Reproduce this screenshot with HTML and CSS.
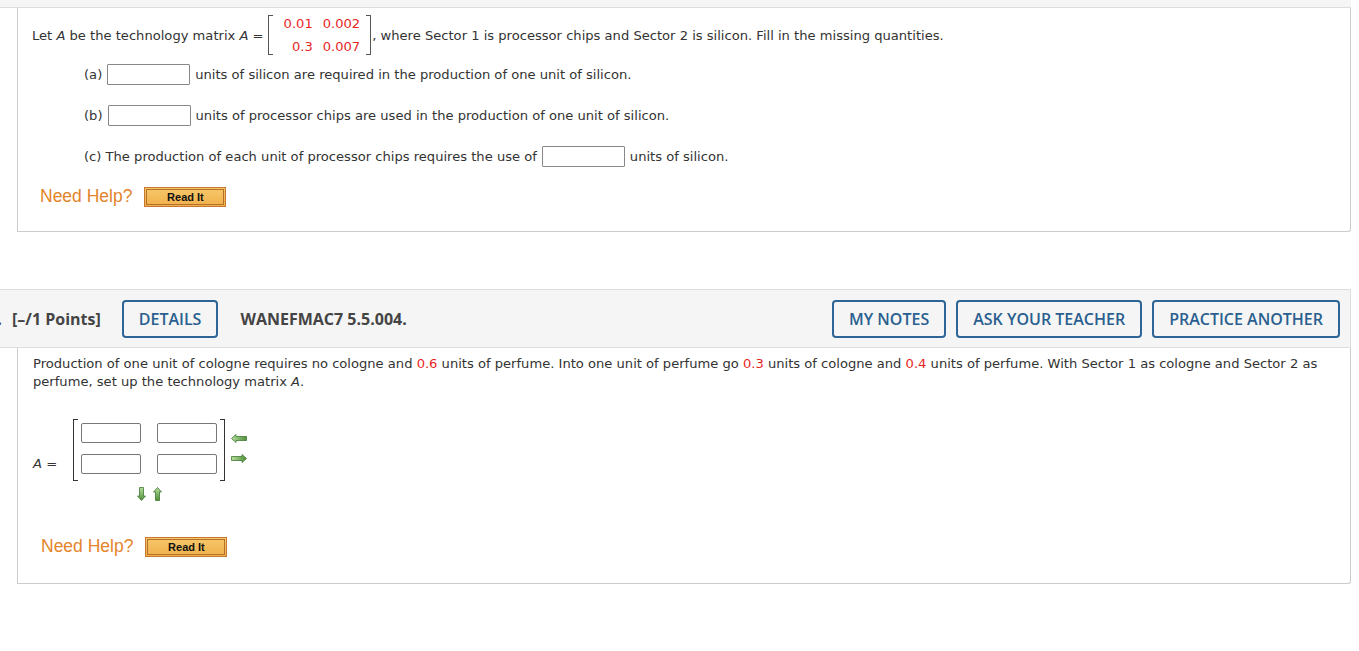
FILE: index.html
```html
<!DOCTYPE html>
<html>
<head>
<meta charset="utf-8">
<link rel="stylesheet" href="styles.css">
</head>
<body>
<div class="top-strip"></div>
<div class="qbox qbox-first">
  <div class="stem">
    <span>Let <i>A</i> be the technology matrix <i>A</i> =</span>
    <span class="matrix">
      <span class="brk brk-l"></span>
      <span class="mgrid">
        <span class="red">0.01</span><span class="red">0.002</span>
        <span class="red">0.3</span><span class="red">0.007</span>
      </span>
      <span class="brk brk-r"></span>
    </span>
    <span class="after-matrix">, where Sector 1 is processor chips and Sector 2 is silicon. Fill in the missing quantities.</span>
  </div>
  <div class="part"><span>(a)</span><span class="ans"></span><span>units of silicon are required in the production of one unit of silicon.</span></div>
  <div class="part"><span>(b)</span><span class="ans"></span><span>units of processor chips are used in the production of one unit of silicon.</span></div>
  <div class="part"><span>(c) The production of each unit of processor chips requires the use of</span><span class="ans"></span><span>units of silicon.</span></div>
  <div class="help"><span class="need">Need Help?</span><span class="readit"><span>Read It</span></span></div>
</div>

<div class="qhead">
  <span class="qnum">5.</span>
  <span class="points">[–/1 Points]</span>
  <span class="btn">DETAILS</span>
  <span class="qid">WANEFMAC7 5.5.004.</span>
  <span class="spacer"></span>
  <span class="btn">MY NOTES</span>
  <span class="btn">ASK YOUR TEACHER</span>
  <span class="btn">PRACTICE ANOTHER</span>
</div>
<div class="qbox qbox-second">
  <p class="para">Production of one unit of cologne requires no cologne and <span class="red">0.6</span> units of perfume. Into one unit of perfume go <span class="red">0.3</span> units of cologne and <span class="red">0.4</span> units of perfume. With Sector 1 as cologne and Sector 2 as perfume, set up the technology matrix <i>A</i>.</p>
  <div class="mat-row">
    <span class="alabel"><i>A</i> =</span>
    <div class="mat-wrap">
      <div class="mat-inner">
        <span class="brk2 brk2-l"></span>
        <div class="cells">
          <span class="cell"></span><span class="cell"></span>
          <span class="cell"></span><span class="cell"></span>
        </div>
        <span class="brk2 brk2-r"></span>
        <div class="side-arrows">
          <svg width="16" height="9" viewBox="0 0 16 9"><defs><linearGradient id="g1" x1="0" y1="0" x2="1" y2="0"><stop offset="0" stop-color="#b8dca0"/><stop offset="1" stop-color="#4f8f3a"/></linearGradient></defs><path d="M0.5 4.5 L5 0.5 L5 2.5 L15.5 2.5 L15.5 6.5 L5 6.5 L5 8.5 Z" fill="url(#g1)" stroke="#3f7a2e" stroke-width="0.8"/></svg>
          <svg width="16" height="9" viewBox="0 0 16 9"><defs><linearGradient id="g2" x1="0" y1="0" x2="1" y2="0"><stop offset="0" stop-color="#b8dca0"/><stop offset="1" stop-color="#4f8f3a"/></linearGradient></defs><path d="M15.5 4.5 L11 0.5 L11 2.5 L0.5 2.5 L0.5 6.5 L11 6.5 L11 8.5 Z" fill="url(#g2)" stroke="#3f7a2e" stroke-width="0.8"/></svg>
        </div>
      </div>
      <div class="bottom-arrows">
        <svg width="9" height="14" viewBox="0 0 9 14"><defs><linearGradient id="g3" x1="0" y1="0" x2="0" y2="1"><stop offset="0" stop-color="#b8dca0"/><stop offset="1" stop-color="#4f8f3a"/></linearGradient></defs><path d="M4.5 13.5 L0.5 9 L2.5 9 L2.5 0.5 L6.5 0.5 L6.5 9 L8.5 9 Z" fill="url(#g3)" stroke="#3f7a2e" stroke-width="0.8"/></svg>
        <svg width="9" height="14" viewBox="0 0 9 14"><defs><linearGradient id="g4" x1="0" y1="0" x2="0" y2="1"><stop offset="0" stop-color="#b8dca0"/><stop offset="1" stop-color="#4f8f3a"/></linearGradient></defs><path d="M4.5 0.5 L0.5 5 L2.5 5 L2.5 13.5 L6.5 13.5 L6.5 5 L8.5 5 Z" fill="url(#g4)" stroke="#3f7a2e" stroke-width="0.8"/></svg>
      </div>
    </div>
  </div>
  <div class="help help2"><span class="need">Need Help?</span><span class="readit"><span>Read It</span></span></div>
</div>
</body>
</html>
```
FILE: styles.css
```css
html, body {
  margin: 0;
  padding: 0;
  background: #fff;
}
body {
  font-family: "DejaVu Sans", Verdana, sans-serif;
  font-size: 13.1px;
  color: #333;
  width: 1359px;
  overflow: hidden;
}
.red { color: #e8261f; }
.top-strip {
  width: 1351px;
  height: 7px;
  background: #f5f5f5;
  border-bottom: 1px solid #ddd;
}
.qbox {
  margin-left: 17px;
  width: 1332px;
  border: 1px solid #ccc;
  border-top: none;
  border-bottom-right-radius: 3px;
  box-sizing: content-box;
}
.qbox-first {
  height: 216px;
  padding: 7px 0 0 14px;
  width: 1318px;
}
.stem {
  display: flex;
  align-items: center;
  height: 40px;
}
.matrix {
  display: flex;
  align-items: stretch;
  height: 40px;
  margin-left: 4px;
}
.brk {
  width: 4px;
  border: 1px solid #555;
}
.brk-l { border-right: none; }
.brk-r { border-left: none; }
.mgrid {
  display: grid;
  grid-template-columns: auto auto;
  column-gap: 10px;
  row-gap: 5px;
  justify-items: end;
  align-content: center;
  padding: 0 6px 0 11px;
  line-height: 18px;
}
.after-matrix { margin-left: 1px; }
.part {
  display: flex;
  align-items: center;
  gap: 5px;
  height: 21px;
  margin-left: 52px;
  margin-top: 20px;
}
.stem + .part { margin-top: 9px; }
.ans {
  display: inline-block;
  width: 81px;
  height: 19px;
  border: 1px solid #888;
  border-radius: 1px;
  background: #fff;
}
.help {
  display: flex;
  align-items: center;
  gap: 12px;
  margin-top: 19px;
  margin-left: 8px;
}
.need {
  font-family: "Liberation Sans", Arial, sans-serif;
  font-size: 17.5px;
  color: #e4842a;
}
.readit {
  display: inline-block;
  width: 78px;
  height: 16px;
  padding: 1px;
  border: 1px solid #c8782e;
  background: linear-gradient(#f7c86a, #f0b04c);
}
.readit span {
  display: block;
  height: 14px;
  border: 1px solid #b46f2b;
  text-align: center;
  font-family: "Liberation Sans", Arial, sans-serif;
  font-weight: bold;
  font-size: 11px;
  line-height: 14px;
  color: #111;
}
.qhead {
  margin-top: 57px;
  width: 1350px;
  height: 57px;
  background: #f5f5f5;
  border-top: 1px solid #ddd;
  border-right: 1px solid #ddd;
  border-bottom: 1px solid #ddd;
  display: flex;
  align-items: center;
  overflow: hidden;
  font-family: "Open Sans", sans-serif;
  font-size: 16px;
  color: #444;
  white-space: nowrap;
}
.qnum {
  font-weight: 700;
  margin-left: -12px;
  width: 24px;
}
.points { font-weight: 700; margin-right: 21px; }
.qid { font-weight: 700; margin-left: 22px; }
.spacer { flex: 1; }
.btn {
  display: inline-flex;
  align-items: center;
  justify-content: center;
  height: 34px;
  padding: 0 15px;
  border: 2px solid #2d6596;
  border-radius: 4px;
  color: #2a5f8f;
  font-weight: 600;
  background: #f5f5f5;
}
.btn + .btn { margin-left: 10px; }
.qhead .btn:last-child { margin-right: 10px; }
.qbox-second {
  height: 235px;
  padding: 0 16px 0 15px;
  width: 1301px;
}
.para {
  margin: 0;
  padding-top: 7px;
  line-height: 18px;
}
.mat-row {
  display: flex;
  align-items: flex-start;
  margin-top: 28px;
}
.alabel {
  width: 40px;
  margin-top: 36px;
  line-height: 18px;
}
.mat-inner {
  display: flex;
  align-items: stretch;
  height: 62px;
}
.brk2 {
  width: 4px;
  border: 1px solid #333;
}
.brk2-l { border-right: none; }
.brk2-r { border-left: none; }
.cells {
  display: grid;
  grid-template-columns: 60px 60px;
  grid-template-rows: 20px 20px;
  align-content: start;
  column-gap: 16px;
  row-gap: 11px;
  padding: 4px 3px 0 3px;
}
.cell {
  display: block;
  height: 18px;
  border: 1px solid #777;
  border-radius: 2px;
  background: #fff;
}
.side-arrows {
  display: flex;
  flex-direction: column;
  gap: 11px;
  margin-left: 6px;
  padding-top: 15px;
}
.side-arrows svg { display: block; }
.bottom-arrows {
  display: flex;
  gap: 7px;
  margin-left: 64px;
  margin-top: 6px;
}
.bottom-arrows svg { display: block; }
.help2 { margin-top: 35px; margin-left: 8px; }
```
